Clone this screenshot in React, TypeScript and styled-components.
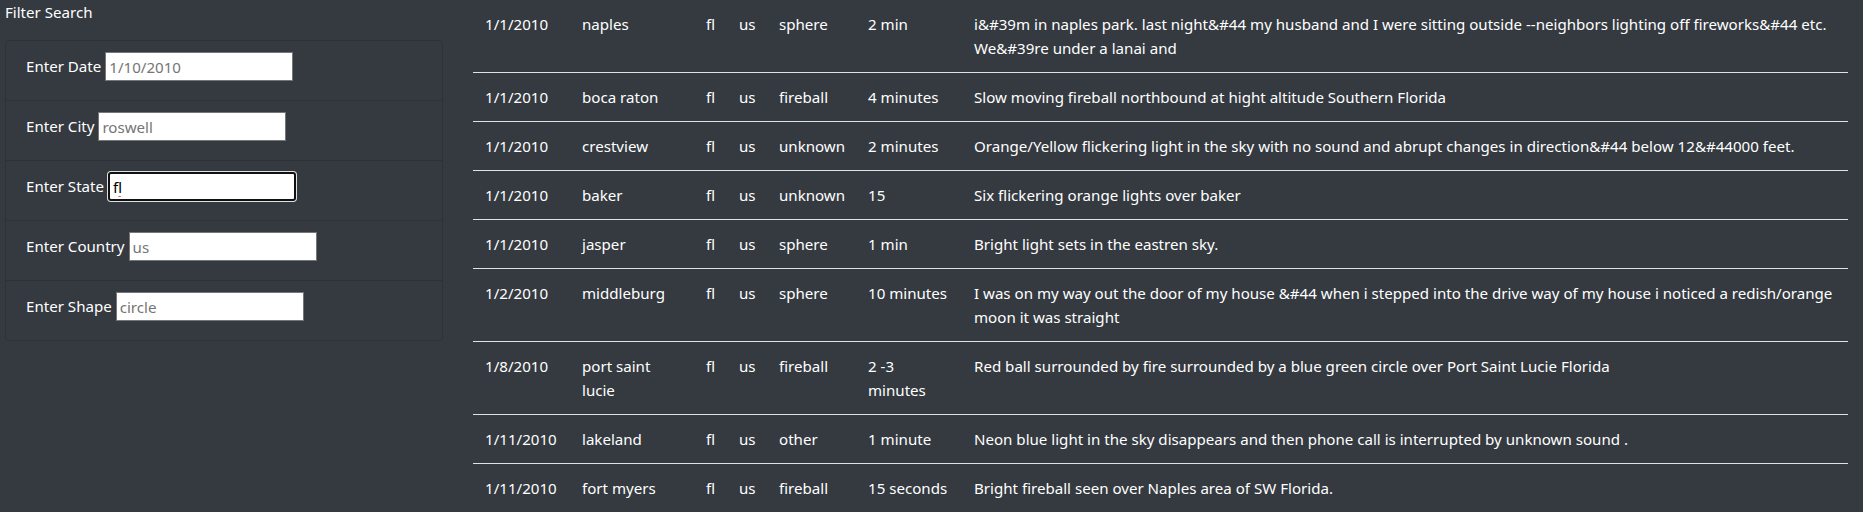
import React from "react";
import styled, { createGlobalStyle } from "styled-components";

const GlobalStyle = createGlobalStyle`
  html, body {
    margin: 0;
    padding: 0;
    background: #343a40;
  }
  body {
    font-family: "Noto Sans", "Open Sans", sans-serif;
    font-size: 15.1px;
    line-height: 24px;
    color: #fff;
  }
  * {
    box-sizing: border-box;
  }
`;

const Page = styled.div`
  display: flex;
  align-items: flex-start;
  width: 1863px;
  height: 512px;
  overflow: hidden;
  background: #343a40;
`;

const Sidebar = styled.aside`
  width: 448px;
  flex: none;
  padding: 0 5px;
`;

const SidebarTitle = styled.div`
  margin-bottom: 16px;
`;

const FilterList = styled.ul`
  list-style: none;
  margin: 0;
  padding: 0;
  border: 1px solid rgba(0, 0, 0, 0.125);
  border-radius: 4px;
`;

const FilterItem = styled.li`
  display: flex;
  align-items: flex-start;
  gap: 4px;
  height: 60px;
  padding: 11px 20px 0;
  border-bottom: 1px solid rgba(0, 0, 0, 0.125);
  &:last-child {
    border-bottom: none;
    height: 59px;
  }
`;

const FilterLabel = styled.label`
  line-height: 29px;
  white-space: nowrap;
`;

const FilterInput = styled.input<{ $active?: boolean }>`
  width: 188px;
  height: 29px;
  padding: 1px 3px;
  font: inherit;
  font-size: 15.1px;
  color: #000;
  background: #fff;
  border: ${(p) => (p.$active ? "2px solid #111" : "1px solid #767676")};
  border-radius: ${(p) => (p.$active ? "3px" : "0")};
  box-shadow: ${(p) => (p.$active ? "0 0 0 1px rgba(255,255,255,0.85)" : "none")};
  text-decoration: ${(p) => (p.$active ? "underline wavy #e0201c" : "none")};
  text-decoration-skip-ink: none;
  text-underline-offset: 3px;
  outline: none;
  &::placeholder {
    color: #757575;
  }
`;

const Main = styled.main`
  flex: 1;
  padding: 0 15px 0 25px;
`;

const Table = styled.table`
  width: 100%;
  table-layout: fixed;
  border-collapse: collapse;
  color: #fff;
`;

const Cell = styled.td`
  padding: 12px;
  vertical-align: top;
`;

const Row = styled.tr`
  & + & ${Cell} {
    border-top: 1px solid #dee2e6;
  }
`;

type Sighting = [string, string, string, string, string, string, string];

const rows: Sighting[] = [
  ["1/1/2010", "naples", "fl", "us", "sphere", "2 min", "i&#39m in naples park. last night&#44 my husband and I were sitting outside --neighbors lighting off fireworks&#44 etc. We&#39re under a lanai and"],
  ["1/1/2010", "boca raton", "fl", "us", "fireball", "4 minutes", "Slow moving fireball northbound at hight altitude Southern Florida"],
  ["1/1/2010", "crestview", "fl", "us", "unknown", "2 minutes", "Orange/Yellow flickering light in the sky with no sound and abrupt changes in direction&#44 below 12&#44000 feet."],
  ["1/1/2010", "baker", "fl", "us", "unknown", "15", "Six flickering orange lights over baker"],
  ["1/1/2010", "jasper", "fl", "us", "sphere", "1 min", "Bright light sets in the eastren sky."],
  ["1/2/2010", "middleburg", "fl", "us", "sphere", "10 minutes", "I was on my way out the door of my house &#44 when i stepped into the drive way of my house i noticed a redish/orange moon it was straight"],
  ["1/8/2010", "port saint lucie", "fl", "us", "fireball", "2 -3 minutes", "Red ball surrounded by fire surrounded by a blue green circle over Port Saint Lucie Florida"],
  ["1/11/2010", "lakeland", "fl", "us", "other", "1 minute", "Neon blue light in the sky disappears and then phone call is interrupted by unknown sound ."],
  ["1/11/2010", "fort myers", "fl", "us", "fireball", "15 seconds", "Bright fireball seen over Naples area of SW Florida."],
];

const colWidths = [97, 124, 33, 40, 89, 106];

const filters = [
  { label: "Enter Date", placeholder: "1/10/2010" },
  { label: "Enter City", placeholder: "roswell" },
  { label: "Enter State", placeholder: "", value: "fl" },
  { label: "Enter Country", placeholder: "us" },
  { label: "Enter Shape", placeholder: "circle" },
];

export default function App() {
  return (
    <>
      <GlobalStyle />
      <Page>
        <Sidebar>
          <SidebarTitle>Filter Search</SidebarTitle>
          <FilterList>
            {filters.map((f) => (
              <FilterItem key={f.label}>
                <FilterLabel>{f.label}</FilterLabel>
                <FilterInput
                  type="text"
                  placeholder={f.placeholder}
                  defaultValue={f.value}
                  $active={!!f.value}
                  spellCheck={false}
                />
              </FilterItem>
            ))}
          </FilterList>
        </Sidebar>
        <Main>
          <Table>
            <colgroup>
              {colWidths.map((w, i) => (
                <col key={i} style={{ width: w }} />
              ))}
              <col />
            </colgroup>
            <tbody>
              {rows.map((r, i) => (
                <Row key={i}>
                  {r.map((v, j) => (
                    <Cell key={j}>{v}</Cell>
                  ))}
                </Row>
              ))}
            </tbody>
          </Table>
        </Main>
      </Page>
    </>
  );
}
